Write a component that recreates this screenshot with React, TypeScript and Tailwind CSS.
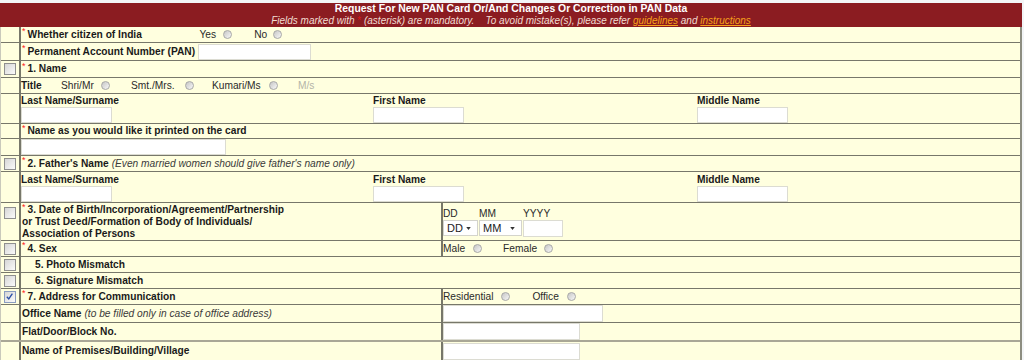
import React from 'react'

const Star = () => (
  <span className="relative -top-[3px] mr-[2px] text-[9px] leading-none font-normal text-[#ff2020]">*</span>
)

const Box = ({ on = false }: { on?: boolean }) => (
  <span
    className={`flex h-[12px] w-[12px] items-center justify-center border bg-linear-to-br from-[#d6d6d6] to-[#fbfbfb] ${
      on ? 'border-[#8a9cc0]' : 'border-[#8f8f8f]'
    }`}
  >
    {on && (
      <svg viewBox="0 0 10 10" className="h-[9px] w-[9px]">
        <path d="M2 5.2 L4.2 7.6 L8.2 1.8" fill="none" stroke="#2b4fa6" strokeWidth="1.5" />
      </svg>
    )}
  </span>
)

const Radio = ({ className = '' }: { className?: string }) => (
  <span
    className={`inline-block h-[9px] w-[9px] rounded-full border border-[#a8a8a8] bg-linear-to-br from-[#c6c6c6] to-[#f8f8f8] ${className}`}
  />
)

const Field = ({ className = '' }: { className?: string }) => (
  <input readOnly className={`block border border-[#dcdcd2] bg-white outline-none ${className}`} />
)

const Select = ({ label, className = '' }: { label: string; className?: string }) => (
  <span className={`flex h-[16px] items-center justify-between border border-[#d4d4cc] bg-white pl-[3px] pr-[6px] text-[11px] text-[#222] ${className}`}>
    {label}
    <svg viewBox="0 0 6 4" className="h-[3px] w-[5px]">
      <path d="M0 0 L6 0 L3 4 Z" fill="#333" />
    </svg>
  </span>
)

function Row({
  h,
  box,
  on,
  top,
  children,
  line = 'border-b border-[#77776a]',
}: {
  h: string
  box?: boolean
  on?: boolean
  top?: boolean
  children: React.ReactNode
  line?: string
}) {
  return (
    <div className={`flex ${h} ${line}`}>
      <div
        className={`flex w-[20px] shrink-0 justify-center border-r-2 border-[#77776a] pr-[1px] ${
          top ? 'items-start pt-[4px]' : 'items-center'
        }`}
      >
        {box && <Box on={on} />}
      </div>
      <div className="flex min-w-0 flex-1">{children}</div>
    </div>
  )
}

const B = ({ children, className = '' }: { children: React.ReactNode; className?: string }) => (
  <span className={`font-bold text-[#1a1a1a] ${className}`}>{children}</span>
)

function NameGrid({ pt }: { pt: string }) {
  return (
    <div className={`grid w-full grid-cols-[352px_324px_1fr] ${pt}`}>
      {['Last Name/Surname', 'First Name', 'Middle Name'].map((t) => (
        <div key={t}>
          <div className="font-bold leading-[12px] text-[#1a1a1a]">{t}</div>
          <Field className="h-[16px] w-[91px]" />
        </div>
      ))}
    </div>
  )
}

const Left = ({ children }: { children: React.ReactNode }) => (
  <div className="flex w-[422px] shrink-0 items-center border-r-2 border-[#77776a] pl-[1px]">{children}</div>
)

export default function App() {
  return (
    <div className="h-[360px] overflow-hidden bg-[#f3f5f7] pt-[3px] font-['Liberation_Sans',Arial,sans-serif] text-[10.2px] text-[#2a2a2a]">
      <div className="w-[1022px] bg-[#8b1c21] text-center leading-[12px]">
        <div className="text-[10.4px] font-bold text-white">
          Request For New PAN Card Or/And Changes Or Correction in PAN Data
        </div>
        <div className="text-[10px] italic text-[#f1dcd2]">
          Fields marked with <span className="not-italic text-[#d81818]">*</span> (asterisk) are mandatory.
          {'\u00a0\u00a0\u00a0 '}To avoid mistake(s), please refer{' '}
          <a className="text-[#f7a21b] underline">guidelines</a> and{' '}
          <a className="text-[#f7a21b] underline">instructions</a>
        </div>
      </div>

      <div className="w-[1022px] border-l border-r-2 border-l-[#c9c9bb] border-r-[#8d8d80] bg-[#ffffdf]">
        <Row h="h-[16px]">
          <div className="flex items-center pl-[1px]">
            <Star />
            <B className="w-[172px]">Whether citizen of India</B>
            <span>Yes</span>
            <Radio className="ml-[7px]" />
            <span className="ml-[22px]">No</span>
            <Radio className="ml-[6px]" />
          </div>
        </Row>

        <Row h="h-[18px]">
          <div className="flex items-center pl-[1px]">
            <Star />
            <B>Permanent Account Number (PAN)</B>
            <Field className="ml-[3px] h-[16px] w-[113px]" />
          </div>
        </Row>

        <Row h="h-[17px]" box>
          <div className="flex items-center pl-[1px]">
            <Star />
            <B>1. Name</B>
          </div>
        </Row>

        <Row h="h-[16px]">
          <div className="flex items-center">
            <B className="w-[40px]">Title</B>
            <span className="flex w-[70px] items-center">
              Shri/Mr
              <Radio className="ml-[7px]" />
            </span>
            <span className="flex w-[81px] items-center">
              Smt./Mrs.
              <Radio className="ml-[10px]" />
            </span>
            <span className="flex w-[86px] items-center">
              Kumari/Ms
              <Radio className="ml-[8px]" />
            </span>
            <span className="text-[#b4b4a8]">M/s</span>
          </div>
        </Row>

        <Row h="h-[30px]">
          <NameGrid pt="pt-[1px]" />
        </Row>

        <Row h="h-[15px]">
          <div className="flex items-center pl-[1px]">
            <Star />
            <B>Name as you would like it printed on the card</B>
          </div>
        </Row>

        <Row h="h-[17px]">
          <Field className="h-[16px] w-[205px]" />
        </Row>

        <Row h="h-[16px]" box>
          <div className="flex items-center pl-[1px]">
            <Star />
            <B>2. Father's Name</B>
            <span className="ml-[3px] italic text-[#3a3a3a]">(Even married women should give father's name only)</span>
          </div>
        </Row>

        <Row h="h-[31px]">
          <NameGrid pt="pt-[2px]" />
        </Row>

        <Row h="h-[38px]" box top>
          <div className="w-[422px] shrink-0 border-r-2 border-[#77776a] pl-[1px] pt-[1px] leading-[12px]">
            <Star />
            <B>
              3. Date of Birth/Incorporation/Agreement/Partnership
              <br />
              or Trust Deed/Formation of Body of Individuals/
              <br />
              Association of Persons
            </B>
          </div>
          <div className="pt-[5px] leading-[12px]">
            <div className="flex">
              <span className="w-[36px]">DD</span>
              <span className="w-[44px]">MM</span>
              <span>YYYY</span>
            </div>
            <div className="flex gap-[1px]">
              <Select label="DD" className="w-[35px]" />
              <Select label="MM" className="w-[43px]" />
              <Field className="h-[17px] w-[40px]" />
            </div>
          </div>
        </Row>

        <Row h="h-[16px]" box>
          <Left>
            <Star />
            <B>4. Sex</B>
          </Left>
          <div className="flex items-center">
            Male
            <Radio className="ml-[8px]" />
            <span className="ml-[21px]">Female</span>
            <Radio className="ml-[7px]" />
          </div>
        </Row>

        <Row h="h-[16px]" box>
          <div className="flex items-center pl-[14px]">
            <B>5. Photo Mismatch</B>
          </div>
        </Row>

        <Row h="h-[16px]" box>
          <div className="flex items-center pl-[14px]">
            <B>6. Signature Mismatch</B>
          </div>
        </Row>

        <Row h="h-[16px]" box on>
          <Left>
            <Star />
            <B>7. Address for Communication</B>
          </Left>
          <div className="flex items-center">
            Residential
            <Radio className="ml-[8px]" />
            <span className="ml-[22px]">Office</span>
            <Radio className="ml-[8px]" />
          </div>
        </Row>

        <Row h="h-[18px]">
          <Left>
            <B>Office Name</B>
            <span className="ml-[3px] italic text-[#3a3a3a]">(to be filled only in case of office address)</span>
          </Left>
          <div className="flex items-center">
            <Field className="h-[17px] w-[160px]" />
          </div>
        </Row>

        <Row h="h-[19px]" line="border-b-2 border-[#a9a796]">
          <Left>
            <B>Flat/Door/Block No.</B>
          </Left>
          <div className="flex items-center">
            <Field className="h-[17px] w-[137px]" />
          </div>
        </Row>

        <Row h="h-[18px]" line="">
          <Left>
            <B>Name of Premises/Building/Village</B>
          </Left>
          <div className="flex items-center">
            <Field className="h-[17px] w-[137px]" />
          </div>
        </Row>
      </div>
    </div>
  )
}
